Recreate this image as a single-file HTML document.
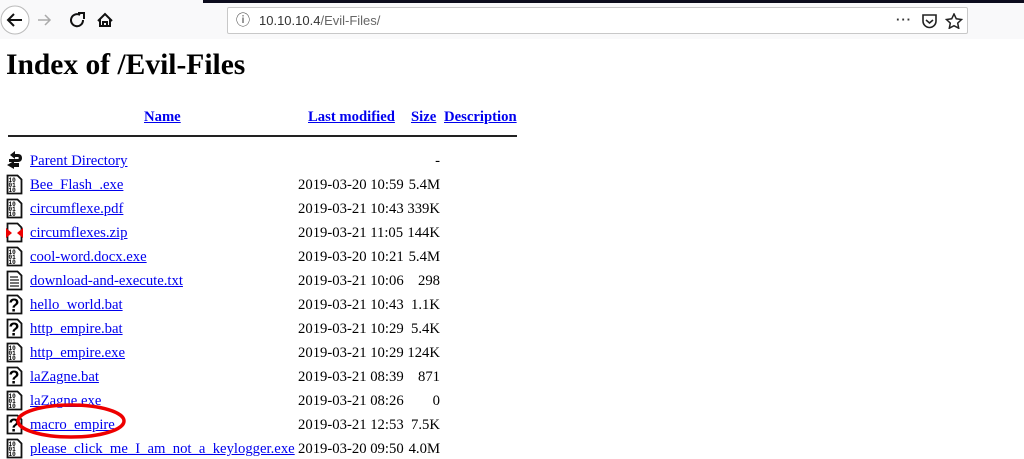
<!DOCTYPE html>
<html><head><style>
body{margin:0;width:1024px;height:457px;background:#fff;position:relative;overflow:hidden;font-family:"Liberation Serif",serif;}
.tb{position:absolute;left:0;top:0;width:1024px;height:39px;background:#f9f9fa;}
.dark{position:absolute;left:203px;top:0;width:821px;height:3px;background:#0c0c1d;}
.url{position:absolute;left:227px;top:7px;width:741px;height:27px;border:1px solid #c8c8c8;background:#fff;border-radius:2px;box-sizing:border-box;font-family:"Liberation Sans",sans-serif;font-size:13px;line-height:25px;color:#333;}
a{color:#0000ee;text-decoration:underline;}
.abs{position:absolute;white-space:pre;font-size:14.7px;line-height:16px;}
h1{position:absolute;left:6px;top:49px;margin:0;font-size:29.5px;font-weight:bold;}
.hd{position:absolute;top:109px;font-weight:bold;font-size:14.7px;}
.hr{position:absolute;left:8px;top:135px;width:509px;height:2px;background:#222;}
.ic{position:absolute;left:6px;width:17px;height:21px;}
</style></head><body>
<div class="tb"></div><div class="dark"></div>
<svg style="position:absolute;left:0;top:2px" width="120" height="36">
<circle cx="15" cy="18" r="14" fill="#fff" stroke="#bbb"/>
<path d="M22 18H9M14 12l-6 6 6 6" stroke="#111" stroke-width="2" fill="none"/>
<path d="M50 18H38M45 13l5 5-5 5" stroke="#aaa" stroke-width="1.5" fill="none"/>
<path d="M80 13a6 6 0 1 0 3 5" stroke="#111" stroke-width="2" fill="none"/><path d="M78 11h6v6" fill="none" stroke="#111" stroke-width="2"/>
<path d="M98 19l7-7 7 7M100 17v7h10v-7M103 24v-4h4v4" stroke="#111" stroke-width="2" fill="none"/>
</svg>
<div class="url"><span style="position:absolute;left:8px;top:0;font-size:14px">ⓘ</span><span style="position:absolute;left:31px">10.10.10.4<span style="color:#666">/Evil-Files/</span></span>
<span style="position:absolute;left:668px;top:-1px;font-weight:bold;letter-spacing:1px">···</span>
<svg style="position:absolute;left:693px;top:5px" width="50" height="16"><path d="M2 2h13v6a6.5 6.5 0 0 1-13 0z" fill="none" stroke="#222" stroke-width="1.6"/><path d="M5 7l3.5 3 3.5-3" fill="none" stroke="#222" stroke-width="1.6"/><path d="M33 1l2.3 4.8 5.2.7-3.8 3.6 1 5.1-4.7-2.5-4.7 2.5 1-5.1-3.8-3.6 5.2-.7z" fill="none" stroke="#222" stroke-width="1.5"/></svg></div>
<h1>Index of /Evil-Files</h1>
<div class="hd" style="left:144px"><a>Name</a></div>
<div class="hd" style="left:308px"><a>Last modified</a></div>
<div class="hd" style="left:411px"><a>Size</a></div>
<div class="hd" style="left:444px"><a>Description</a></div>
<div class="hr"></div>
<div id="rows"></div>
<svg style="position:absolute;left:14px;top:402px" width="115" height="38"><ellipse cx="57" cy="19" rx="53" ry="16" fill="none" stroke="#e00" stroke-width="3.5"/></svg>
<script>
var r=[["Parent Directory","","",'p'],["Bee_Flash_.exe","2019-03-20 10:59","5.4M",'b'],["circumflexe.pdf","2019-03-21 10:43","339K",'b'],["circumflexes.zip","2019-03-21 11:05","144K",'z'],["cool-word.docx.exe","2019-03-20 10:21","5.4M",'b'],["download-and-execute.txt","2019-03-21 10:06","298",'t'],["hello_world.bat","2019-03-21 10:43","1.1K",'q'],["http_empire.bat","2019-03-21 10:29","5.4K",'q'],["http_empire.exe","2019-03-21 10:29","124K",'b'],["laZagne.bat","2019-03-21 08:39","871",'q'],["laZagne.exe","2019-03-21 08:26","0",'b'],["macro_empire","2019-03-21 12:53","7.5K",'q'],["please_click_me_I_am_not_a_keylogger.exe","2019-03-20 09:50","4.0M",'b']];
var h='';
r.forEach(function(x,i){var y=153+i*24;
var ic;
if(x[3]=='p')ic='<svg class="ic" style="top:'+(y-3)+'px" viewBox="0 0 17 21"><path d="M3 12h9c3 0 4-2 4-4s-1-4-4-4H9V1L4 5l5 4V7h3c1 0 1 2 0 2H3z" fill="#111"/><path d="M8 11l-7 4 7 4v-2h5v-4H8z" fill="#111"/></svg>';
else{var inner=x[3]=='b'?'<text x="2.5" y="8" font-size="6" font-family="Liberation Mono" font-weight="bold">10</text><text x="2.5" y="13" font-size="6" font-family="Liberation Mono" font-weight="bold">01</text><text x="2.5" y="18" font-size="6" font-family="Liberation Mono" font-weight="bold">10</text>':x[3]=='q'?'<text x="2.5" y="17.5" font-size="18" font-weight="bold" font-family="Liberation Sans">?</text>':x[3]=='t'?'<path d="M4 7h8M4 10h9M4 13h9M4 16h9" stroke="#222" stroke-width="1.2"/>':'<path d="M0 6l6 5-6 5zM17 6l-6 5 6 5z" fill="#e00"/>';
ic='<svg class="ic" style="top:'+(y-3)+'px" viewBox="0 0 17 21"><path d="M1.5 1.5h10l4 4v14h-14z" fill="#fff" stroke="#111" stroke-width="1.8"/>'+inner+'</svg>';}
h+=ic+'<div class="abs" style="left:30px;top:'+y+'px"><a>'+x[0]+'</a></div>';
if(x[1])h+='<div class="abs" style="left:298px;top:'+y+'px">'+x[1]+'</div>';
h+='<div class="abs" style="right:584px;top:'+y+'px">'+(x[2]||'-')+'</div>';});
document.getElementById('rows').innerHTML=h;
</script>
</body></html>
